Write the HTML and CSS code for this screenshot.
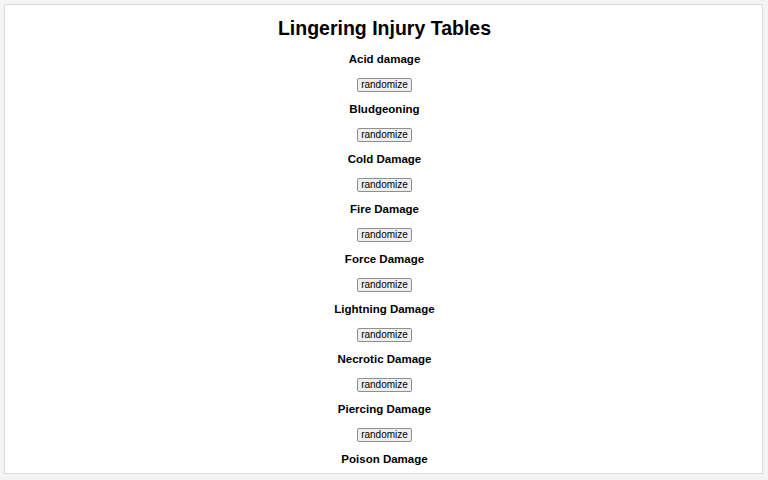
FILE: index.html
```html
<!DOCTYPE html>
<html>
<head>
<meta charset="utf-8">
<link rel="stylesheet" href="styles.css">
</head>
<body>
<div class="card">
  <h1 class="title">Lingering Injury Tables</h1>
  <div class="section"><h3 class="name">Acid damage</h3><button class="btn">randomize</button></div>
  <div class="section"><h3 class="name">Bludgeoning</h3><button class="btn">randomize</button></div>
  <div class="section"><h3 class="name">Cold Damage</h3><button class="btn">randomize</button></div>
  <div class="section"><h3 class="name">Fire Damage</h3><button class="btn">randomize</button></div>
  <div class="section"><h3 class="name">Force Damage</h3><button class="btn">randomize</button></div>
  <div class="section"><h3 class="name">Lightning Damage</h3><button class="btn">randomize</button></div>
  <div class="section"><h3 class="name">Necrotic Damage</h3><button class="btn">randomize</button></div>
  <div class="section"><h3 class="name">Piercing Damage</h3><button class="btn">randomize</button></div>
  <div class="section"><h3 class="name">Poison Damage</h3></div>
</div>
</body>
</html>
```
FILE: styles.css
```css
html, body {
  margin: 0;
  padding: 0;
  background: #f4f4f4;
  font-family: "Liberation Sans", Arial, sans-serif;
  color: #000;
}
body {
  padding: 4px 5px 6px 4px;
  height: 480px;
  box-sizing: border-box;
}
.card {
  background: #fff;
  border: 1px solid #dcdcdc;
  height: 100%;
  box-sizing: border-box;
  overflow: hidden;
  text-align: center;
  padding-top: 12px;
  padding-left: 2px;
}
.title {
  font-size: 19.5px;
  font-weight: bold;
  margin: 0 0 13px;
  line-height: 22px;
}
.section {
  display: flex;
  flex-direction: column;
  align-items: center;
}
.name {
  font-size: 11.5px;
  font-weight: bold;
  margin: 0;
  line-height: 14px;
  padding: 0 0 12px;
}
.btn {
  font-family: "Liberation Sans", Arial, sans-serif;
  font-size: 10px;
  line-height: 12px;
  padding: 0 3px;
  border: 1px solid #8f8f8f;
  border-radius: 2px;
  background: #efefef;
  color: #000;
  margin: 0 0 10px;
}
```
